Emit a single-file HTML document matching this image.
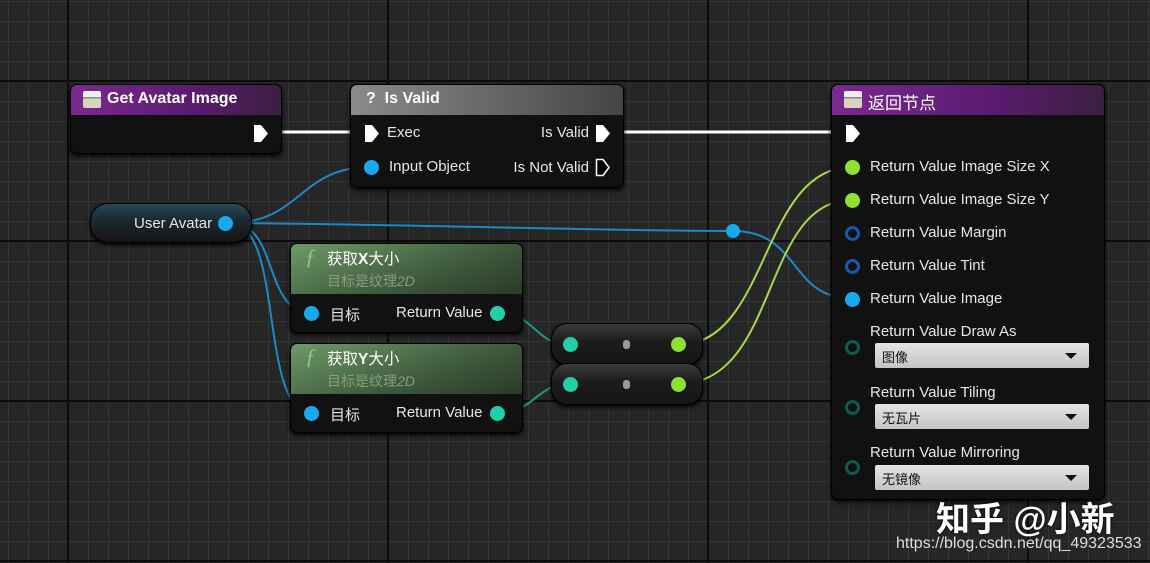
<!DOCTYPE html>
<html><head><meta charset="utf-8"><style>
*{margin:0;padding:0;box-sizing:border-box}
body{width:1150px;height:563px;overflow:hidden;position:relative;font-family:"Liberation Sans","Noto Sans CJK SC",sans-serif;color:#e6e6e6;font-size:14.5px;
background-color:#262626;
background-image:
linear-gradient(90deg,transparent 67px,#0c0c0c 67px,#0c0c0c 69px,transparent 69px),
linear-gradient(180deg,transparent 80px,#0c0c0c 80px,#0c0c0c 82px,transparent 82px),
linear-gradient(90deg,#353535 1px,transparent 1px),
linear-gradient(180deg,#353535 1px,transparent 1px);
background-size:320px 100%,100% 160px,20px 20px,20px 20px;
background-position:0 0,0 0,8px 0,0 1px;}
.node{position:absolute;background:#111;border-radius:7px;box-shadow:0 2px 5px #000;border:1px solid #000}
.hdr{position:absolute;left:0;right:0;top:0;border-radius:6px 6px 0 0;font-weight:bold;font-size:16px;padding:5px 0 0 36px;color:#fff}
.t{position:absolute;white-space:nowrap}
.ic{position:absolute;width:18px;height:17px;border-radius:2px;background:linear-gradient(#eee 0 35%,#888 35% 45%,#d8d4c0 45%)}
.pin{position:absolute;width:15px;height:15px;border-radius:50%;margin:-1px 0 0 -1px}
.dd{position:absolute;left:43px;width:214px;height:25px;background:linear-gradient(#e4e4e4,#c4c4c4);border-radius:2px;color:#111;font-size:13px;padding:4px 0 0 7px}
.dd:after{content:"";position:absolute;right:12px;top:10px;border:6px solid transparent;border-top:6px solid #111;border-bottom:0}
.pill{position:absolute;border-radius:16px;background:linear-gradient(#3a3a3a,#1c1c1c 45%,#161616);box-shadow:0 2px 4px #000;border:1px solid #000}
</style></head><body>
<svg width="1150" height="563" style="position:absolute;left:0;top:0" fill="none">
<path d="M268 132 H360" stroke="#fff" stroke-width="3"/>
<path d="M608 132 H840" stroke="#fff" stroke-width="3"/>
<path d="M230 223 C300 223 300 167 370 167" stroke="#1a8ac8" stroke-width="2"/>
<path d="M230 223 C450 225 600 231 733 231 C800 231 790 298 850 298" stroke="#1a8ac8" stroke-width="2"/>
<circle cx="733" cy="231" r="7" fill="#18a8f0"/>
<path d="M230 223 C280 223 262 313 312 313" stroke="#1a8ac8" stroke-width="2"/>
<path d="M230 223 C285 223 258 413 312 413" stroke="#1a8ac8" stroke-width="2"/>
<path d="M498 313 C535 313 535 345 570 345" stroke="#1a9a84" stroke-width="2"/>
<path d="M498 413 C535 413 535 384 570 384" stroke="#1a9a84" stroke-width="2"/>
<path d="M678 345 C770 345 760 167 852 167" stroke="#a6d84a" stroke-width="2"/>
<path d="M678 384 C780 384 760 200 852 200" stroke="#a6d84a" stroke-width="2"/>
</svg>

<div class="node" style="left:70px;top:84px;width:212px;height:70px">
<div class="hdr" style="height:30px;background:linear-gradient(90deg,#7a2a8e,#5a1a6e 60%,#3a2040)">Get Avatar Image</div>
<div class="ic" style="left:12px;top:6px"></div>
<svg style="position:absolute;left:182px;top:39px" width="16" height="19"><path d="M1 1H8L15 9.5L8 18H1Z" fill="#fff"/></svg>
</div>

<div class="node" style="left:350px;top:84px;width:274px;height:104px">
<div class="hdr" style="height:30px;background:linear-gradient(90deg,#8a8a8a,#5a5a5a 70%,#444);padding-left:15px">? &nbsp;Is Valid</div>
<svg style="position:absolute;left:13px;top:39px" width="16" height="19"><path d="M1 1H8L15 9.5L8 18H1Z" fill="#fff"/></svg>
<div class="t" style="left:36px;top:39px;font-size:15px">Exec</div>
<div class="t" style="right:34px;top:39px;font-size:15px">Is Valid</div>
<svg style="position:absolute;left:244px;top:39px" width="16" height="19"><path d="M1 1H8L15 9.5L8 18H1Z" fill="#fff"/></svg>
<div class="pin" style="left:14px;top:76px;background:#18a8f0"></div>
<div class="t" style="left:38px;top:73px;font-size:15px">Input Object</div>
<div class="t" style="right:34px;top:74px;font-size:15px">Is Not Valid</div>
<svg style="position:absolute;left:244px;top:73px" width="16" height="19"><path d="M1.5 1.5H8L14 9.5L8 17.5H1.5Z" stroke="#fff" stroke-width="1.5"/></svg>
</div>

<div class="pill" style="left:90px;top:203px;width:162px;height:40px;border-radius:18px;background:linear-gradient(#2a4a5a,#1a2a32 40%,#141414)">
<div class="t" style="left:43px;top:11px;font-size:15px">User Avatar</div>
<div class="pin" style="left:128px;top:13px;background:#18a8f0"></div>
</div>

<div class="node" style="left:290px;top:243px;width:233px;height:90px">
<div class="hdr" style="height:50px;background:linear-gradient(160deg,#6e9a68,#3e5a3c 60%,#2a3a28);padding:3px 0 0 36px;font-weight:normal;font-size:15.5px"><i style="position:absolute;left:14px;top:0;color:#8c8;font-family:'Liberation Serif';font-size:22px">ƒ</i>获取<b>X</b>大小<div style="color:#8a9a80;font-size:14px;margin-top:2px">目标是纹理<i>2D</i></div></div>
<div class="pin" style="left:14px;top:63px;background:#18a8f0"></div>
<div class="t" style="left:39px;top:60px;font-size:15px">目标</div>
<div class="t" style="left:105px;top:60px;font-size:15px">Return Value</div>
<div class="pin" style="left:200px;top:63px;background:#20d0a8"></div>
</div>

<div class="node" style="left:290px;top:343px;width:233px;height:90px">
<div class="hdr" style="height:50px;background:linear-gradient(160deg,#6e9a68,#3e5a3c 60%,#2a3a28);padding:3px 0 0 36px;font-weight:normal;font-size:15.5px"><i style="position:absolute;left:14px;top:0;color:#8c8;font-family:'Liberation Serif';font-size:22px">ƒ</i>获取<b>Y</b>大小<div style="color:#8a9a80;font-size:14px;margin-top:2px">目标是纹理<i>2D</i></div></div>
<div class="pin" style="left:14px;top:63px;background:#18a8f0"></div>
<div class="t" style="left:39px;top:60px;font-size:15px">目标</div>
<div class="t" style="left:105px;top:60px;font-size:15px">Return Value</div>
<div class="pin" style="left:200px;top:63px;background:#20d0a8"></div>
</div>

<div class="pill" style="left:551px;top:323px;width:152px;height:42px">
<div class="pin" style="left:12px;top:14px;background:#20d0a8"></div>
<div style="position:absolute;left:71px;top:16px;width:7px;height:9px;border-radius:3px;background:#999"></div>
<div class="pin" style="left:120px;top:14px;background:#90e030"></div>
</div>
<div class="pill" style="left:551px;top:363px;width:152px;height:42px">
<div class="pin" style="left:12px;top:14px;background:#20d0a8"></div>
<div style="position:absolute;left:71px;top:16px;width:7px;height:9px;border-radius:3px;background:#999"></div>
<div class="pin" style="left:120px;top:14px;background:#90e030"></div>
</div>

<div class="node" style="left:831px;top:84px;width:274px;height:416px">
<div class="hdr" style="height:30px;background:linear-gradient(90deg,#7a2a8e,#5a1a6e 60%,#3a2040);font-weight:normal;font-size:17px;padding-top:4px">返回节点</div>
<div class="ic" style="left:12px;top:6px"></div>
<svg style="position:absolute;left:13px;top:39px" width="16" height="19"><path d="M1 1H8L15 9.5L8 18H1Z" fill="#fff"/></svg>
<div class="pin" style="left:14px;top:76px;background:#90e030"></div><div class="t" style="left:38px;top:73px;font-size:15px">Return Value Image Size X</div>
<div class="pin" style="left:14px;top:109px;background:#90e030"></div><div class="t" style="left:38px;top:106px;font-size:15px">Return Value Image Size Y</div>
<div class="pin" style="left:14px;top:142px;border:3px solid #1858b0"></div><div class="t" style="left:38px;top:139px;font-size:15px">Return Value Margin</div>
<div class="pin" style="left:14px;top:175px;border:3px solid #1858b0"></div><div class="t" style="left:38px;top:172px;font-size:15px">Return Value Tint</div>
<div class="pin" style="left:14px;top:208px;background:#18a8f0"></div><div class="t" style="left:38px;top:205px;font-size:15px">Return Value Image</div>
<div class="t" style="left:38px;top:238px;font-size:15px">Return Value Draw As</div>
<div class="pin" style="left:14px;top:256px;border:3px solid #0e5a50"></div>
<div class="dd" style="top:258px">图像</div>
<div class="t" style="left:38px;top:299px;font-size:15px">Return Value Tiling</div>
<div class="pin" style="left:14px;top:316px;border:3px solid #0e5a50"></div>
<div class="dd" style="top:319px">无瓦片</div>
<div class="t" style="left:38px;top:359px;font-size:15px">Return Value Mirroring</div>
<div class="pin" style="left:14px;top:376px;border:3px solid #0e5a50"></div>
<div class="dd" style="top:380px">无镜像</div>
</div>

<div class="t" style="left:936px;top:492px;font-size:34px;font-weight:bold;color:#fff;text-shadow:0 0 3px #000">知乎 @小新</div>
<div class="t" style="left:896px;top:535px;font-size:16px;color:#ddd">https://blog.csdn.net/qq_49323533</div>
</body></html>
